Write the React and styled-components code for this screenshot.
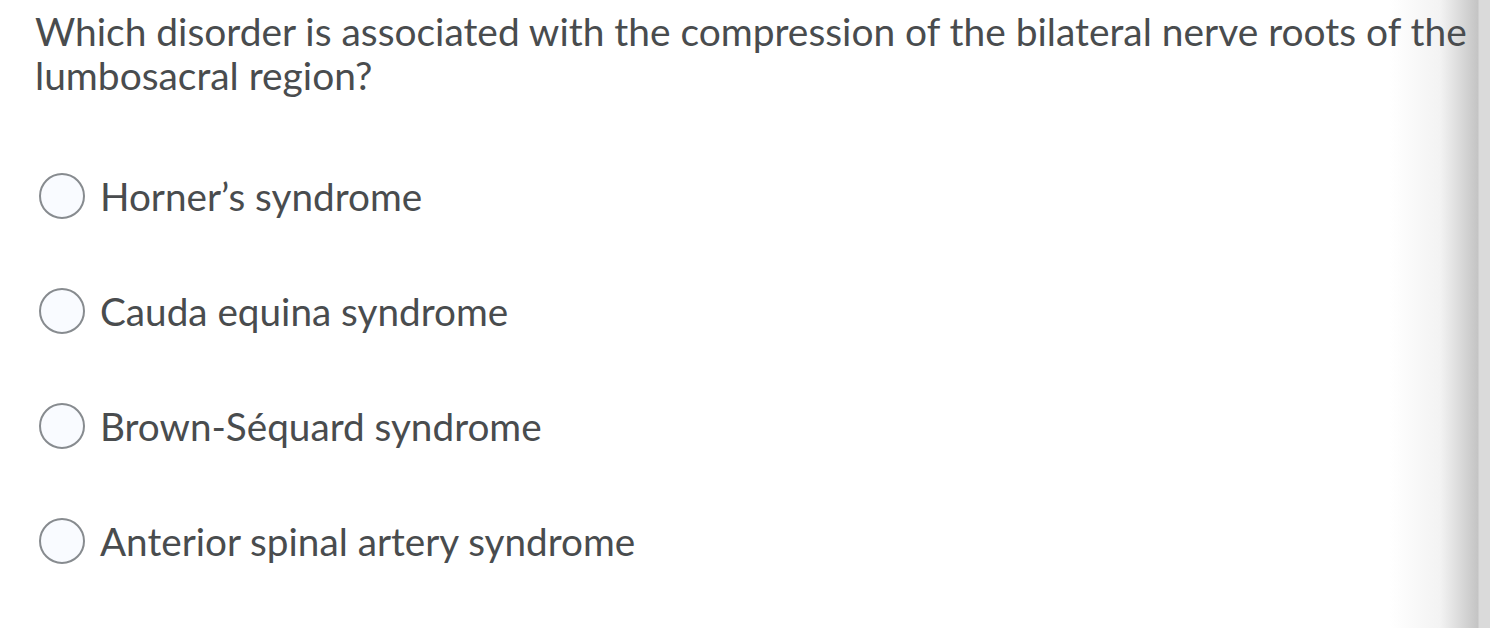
import React from "react";
import styled, { createGlobalStyle } from "styled-components";

const Global = createGlobalStyle`
  html, body { margin: 0; padding: 0; background: #fff; }
  body { font-family: Lato, "Open Sans", sans-serif; color: #494c4e; }
`;

const Page = styled.div`
  width: 1490px;
  height: 628px;
  box-sizing: border-box;
  padding: 9px 0 0 35px;
  background: linear-gradient(to left, #dadada 0, #dadada 11px, #c4c4c4 12px, rgba(235,235,235,0.6) 50px, rgba(255,255,255,0) 100px), #fff;
  overflow: hidden;
`;

const Question = styled.p`
  margin: 0;
  width: 1445px;
  font-size: 38.9px;
  line-height: 44px;
  font-weight: 400;
`;

const Options = styled.div`
  display: flex;
  flex-direction: column;
  gap: 69px;
  margin-top: 76px;
  padding-left: 4px;
`;

const Option = styled.label`
  display: flex;
  align-items: center;
  gap: 15px;
  height: 46px;
  font-size: 38.7px;
`;

const Radio = styled.span`
  width: 42px;
  height: 42px;
  flex: none;
  border-radius: 50%;
  border: 2px solid #878b8f;
  background: #f9fbff;
`;

const options = [
  "Horner’s syndrome",
  "Cauda equina syndrome",
  "Brown-Séquard syndrome",
  "Anterior spinal artery syndrome",
];

export default function App() {
  return (
    <>
      <Global />
      <Page>
        <Question>
          Which disorder is associated with the compression of the bilateral nerve roots of the lumbosacral region?
        </Question>
        <Options>
          {options.map((o) => (
            <Option key={o}>
              <Radio />
              {o}
            </Option>
          ))}
        </Options>
      </Page>
    </>
  );
}
